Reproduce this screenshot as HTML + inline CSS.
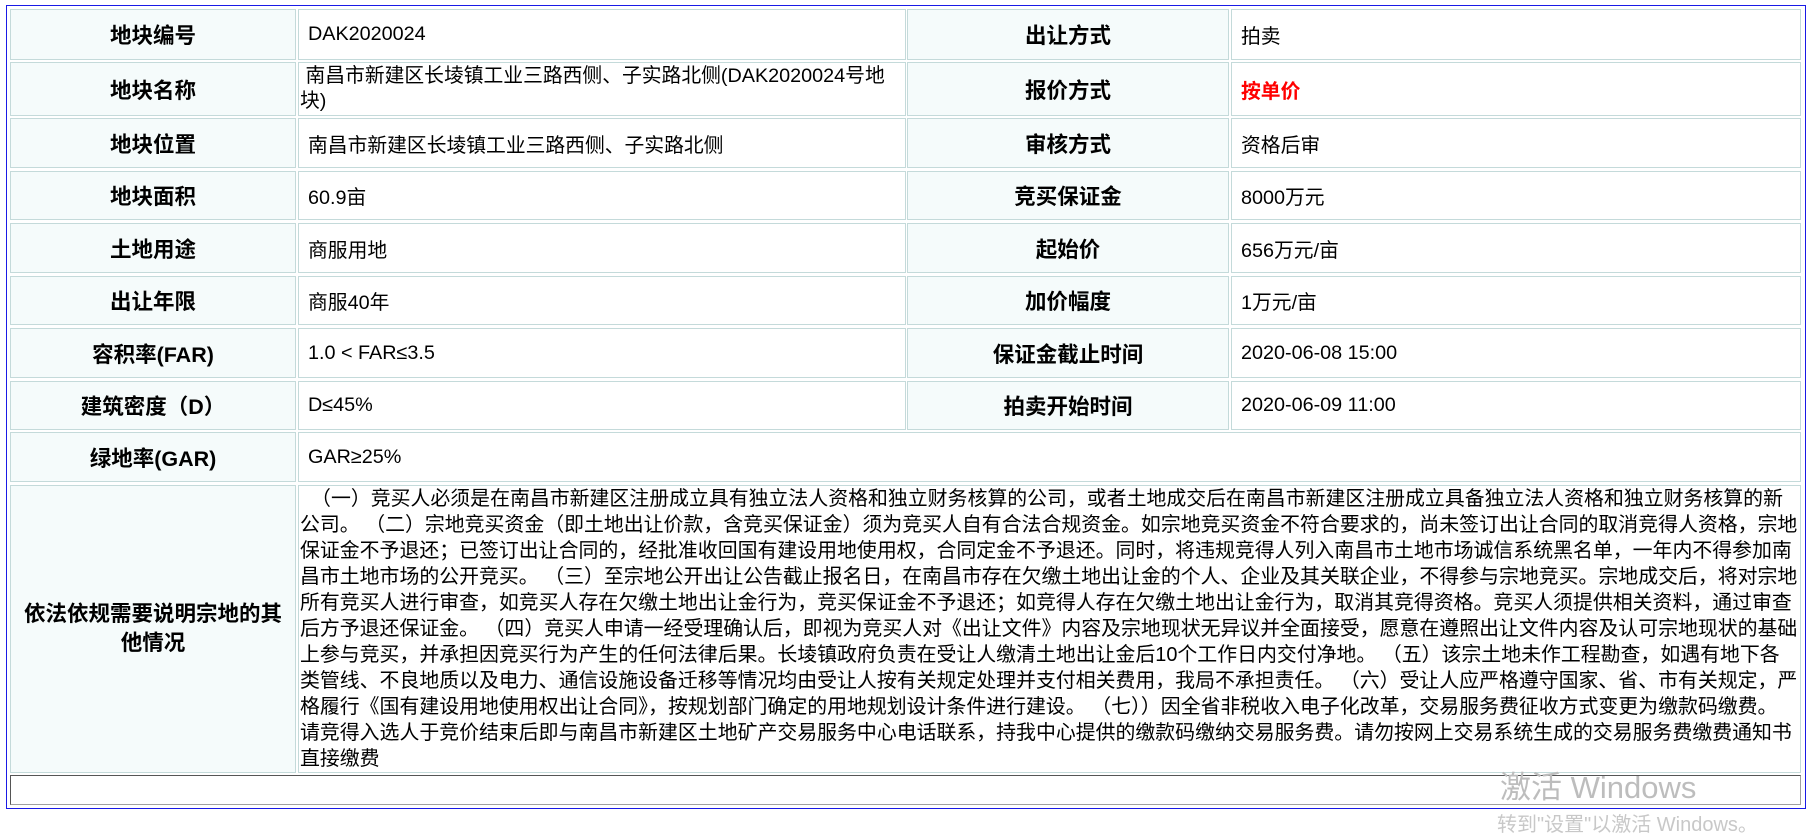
<!DOCTYPE html>
<html><head><meta charset="utf-8"><style>
*{margin:0;padding:0;box-sizing:border-box}
body{width:1810px;height:814px;background:#fff;position:relative;overflow:hidden;font-family:"Liberation Sans","Noto Sans CJK SC",sans-serif;color:#000}
.outer{position:absolute;left:6px;top:5px;width:1800px;height:804px;border:1px solid #1a1ae6}
.c{position:absolute;border:1px solid #c4dada;display:flex;align-items:center;font-size:19.8px;white-space:nowrap;overflow:hidden}
.l{background:#f5fbfb;justify-content:center;font-weight:bold;font-size:21.5px;text-align:center}
.v{padding-left:9px}
.red{color:#f00;font-weight:bold}
.wm{position:absolute;left:1500px;top:762px;font-size:31px;color:#bdbdbd;white-space:nowrap}
.wm2{position:absolute;left:1497px;top:808px;font-size:20px;color:#c8c8c8;white-space:nowrap}
</style></head><body>
<div class="outer"></div>

<div class="c l" style="left:10px;top:9px;width:286px;height:51px">地块编号</div>
<div class="c v" style="left:298px;top:9px;width:608px;height:51px">DAK2020024</div>
<div class="c l" style="left:907px;top:9px;width:322px;height:51px">出让方式</div>
<div class="c v" style="left:1231px;top:9px;width:570px;height:51px">拍卖</div>

<div class="c l" style="left:10px;top:62px;width:286px;height:54px">地块名称</div>
<div class="c" style="left:298px;top:62px;width:608px;height:54px;padding-left:1px;line-height:25px">&nbsp;南昌市新建区长堎镇工业三路西侧、子实路北侧(DAK2020024号地<br>块)</div>
<div class="c l" style="left:907px;top:62px;width:322px;height:54px">报价方式</div>
<div class="c v red" style="left:1231px;top:62px;width:570px;height:54px">按单价</div>

<div class="c l" style="left:10px;top:118px;width:286px;height:50px">地块位置</div>
<div class="c v" style="left:298px;top:118px;width:608px;height:50px">南昌市新建区长堎镇工业三路西侧、子实路北侧</div>
<div class="c l" style="left:907px;top:118px;width:322px;height:50px">审核方式</div>
<div class="c v" style="left:1231px;top:118px;width:570px;height:50px">资格后审</div>

<div class="c l" style="left:10px;top:171px;width:286px;height:49px">地块面积</div>
<div class="c v" style="left:298px;top:171px;width:608px;height:49px">60.9亩</div>
<div class="c l" style="left:907px;top:171px;width:322px;height:49px">竞买保证金</div>
<div class="c v" style="left:1231px;top:171px;width:570px;height:49px">8000万元</div>

<div class="c l" style="left:10px;top:223px;width:286px;height:50px">土地用途</div>
<div class="c v" style="left:298px;top:223px;width:608px;height:50px">商服用地</div>
<div class="c l" style="left:907px;top:223px;width:322px;height:50px">起始价</div>
<div class="c v" style="left:1231px;top:223px;width:570px;height:50px">656万元/亩</div>

<div class="c l" style="left:10px;top:276px;width:286px;height:49px">出让年限</div>
<div class="c v" style="left:298px;top:276px;width:608px;height:49px">商服40年</div>
<div class="c l" style="left:907px;top:276px;width:322px;height:49px">加价幅度</div>
<div class="c v" style="left:1231px;top:276px;width:570px;height:49px">1万元/亩</div>

<div class="c l" style="left:10px;top:328px;width:286px;height:50px">容积率(FAR)</div>
<div class="c v" style="left:298px;top:328px;width:608px;height:50px">1.0 &lt; FAR≤3.5</div>
<div class="c l" style="left:907px;top:328px;width:322px;height:50px">保证金截止时间</div>
<div class="c v" style="left:1231px;top:328px;width:570px;height:50px">2020-06-08 15:00</div>

<div class="c l" style="left:10px;top:381px;width:286px;height:49px">建筑密度（D）</div>
<div class="c v" style="left:298px;top:381px;width:608px;height:49px">D≤45%</div>
<div class="c l" style="left:907px;top:381px;width:322px;height:49px">拍卖开始时间</div>
<div class="c v" style="left:1231px;top:381px;width:570px;height:49px">2020-06-09 11:00</div>

<div class="c l" style="left:10px;top:432px;width:286px;height:50px">绿地率(GAR)</div>
<div class="c v" style="left:298px;top:432px;width:1503px;height:50px">GAR≥25%</div>

<div class="c l" style="left:10px;top:485px;width:286px;height:288px;line-height:29px;white-space:normal;padding:0 8px">依法依规需要说明宗地的其他情况</div>
<div class="c" style="left:298px;top:485px;width:1503px;height:288px;line-height:26px;padding-left:1px;font-size:19.9px">
<div>&nbsp;&nbsp;（一）竞买人必须是在南昌市新建区注册成立具有独立法人资格和独立财务核算的公司，或者土地成交后在南昌市新建区注册成立具备独立法人资格和独立财务核算的新<br>公司。 （二）宗地竞买资金（即土地出让价款，含竞买保证金）须为竞买人自有合法合规资金。如宗地竞买资金不符合要求的，尚未签订出让合同的取消竞得人资格，宗地<br>保证金不予退还；已签订出让合同的，经批准收回国有建设用地使用权，合同定金不予退还。同时，将违规竞得人列入南昌市土地市场诚信系统黑名单，一年内不得参加南<br>昌市土地市场的公开竞买。 （三）至宗地公开出让公告截止报名日，在南昌市存在欠缴土地出让金的个人、企业及其关联企业，不得参与宗地竞买。宗地成交后，将对宗地<br>所有竞买人进行审查，如竞买人存在欠缴土地出让金行为，竞买保证金不予退还；如竞得人存在欠缴土地出让金行为，取消其竞得资格。竞买人须提供相关资料，通过审查<br>后方予退还保证金。 （四）竞买人申请一经受理确认后，即视为竞买人对《出让文件》内容及宗地现状无异议并全面接受，愿意在遵照出让文件内容及认可宗地现状的基础<br>上参与竞买，并承担因竞买行为产生的任何法律后果。长堎镇政府负责在受让人缴清土地出让金后10个工作日内交付净地。 （五）该宗土地未作工程勘查，如遇有地下各<br>类管线、不良地质以及电力、通信设施设备迁移等情况均由受让人按有关规定处理并支付相关费用，我局不承担责任。 （六）受让人应严格遵守国家、省、市有关规定，严<br>格履行《国有建设用地使用权出让合同》，按规划部门确定的用地规划设计条件进行建设。 （七））因全省非税收入电子化改革，交易服务费征收方式变更为缴款码缴费。<br>请竞得入选人于竞价结束后即与南昌市新建区土地矿产交易服务中心电话联系，持我中心提供的缴款码缴纳交易服务费。请勿按网上交易系统生成的交易服务费缴费通知书<br>直接缴费</div>
</div>

<div style="position:absolute;left:10px;top:775px;width:1791px;height:30px;border:1px solid #a0a0a0;border-top-color:#555;border-left-color:#555"></div>

<div class="wm">激活 Windows</div>
<div class="wm2">转到"设置"以激活 Windows。</div>
</body></html>
